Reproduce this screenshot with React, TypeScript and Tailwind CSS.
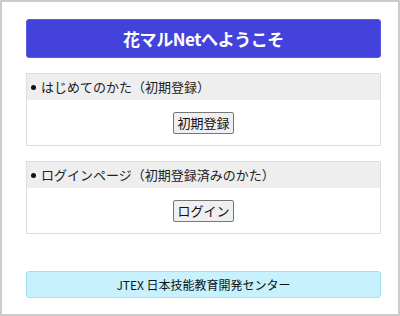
export default function App() {
    const font = { fontFamily: '"Noto Sans CJK JP", "Noto Sans", sans-serif' };
    const btnClass = "h-[22px] px-[3px] bg-[#efefef] border border-[#767676] rounded-[2px] text-[13px] leading-none text-[#111]";

    return (
        <div style={font} className="w-[400px] h-[316px] border-2 border-[#cccccc] bg-white pl-[24px] pt-[17px]">
            <div className="w-[355px] h-[39px] rounded-[3px] bg-[#4343db] border border-[#5a5ae0] flex items-center justify-center">
                <h1 className="text-white text-[17px] font-bold tracking-tight">花マルNetへようこそ</h1>
            </div>

            <div className="mt-[15px] w-[355px] border border-[#dddddd]">
                <div className="h-[26px] bg-[#eeeeee] flex items-center pl-[4px] text-[13px] text-[#222]">
                    <span className="w-[5px] h-[5px] rounded-full bg-[#111] mr-[5px]" />はじめてのかた（初期登録）
                </div>
                <div className="h-[45px] flex items-center justify-center">
                    <button className={btnClass}>初期登録</button>
                </div>
            </div>

            <div className="mt-[15px] w-[355px] border border-[#dddddd]">
                <div className="h-[26px] bg-[#eeeeee] flex items-center pl-[4px] text-[13px] text-[#222]">
                    <span className="w-[5px] h-[5px] rounded-full bg-[#111] mr-[5px]" />ログインページ（初期登録済みのかた）
                </div>
                <div className="h-[45px] flex items-center justify-center">
                    <button className={btnClass}>ログイン</button>
                </div>
            </div>

            <div className="mt-[37px] w-[355px] h-[27px] rounded-[3px] bg-[#c6f1fd] border border-[#9fe2f7] flex items-center justify-center text-[12px] text-[#111]">
                JTEX 日本技能教育開発センター
            </div>
        </div>
    );
}
